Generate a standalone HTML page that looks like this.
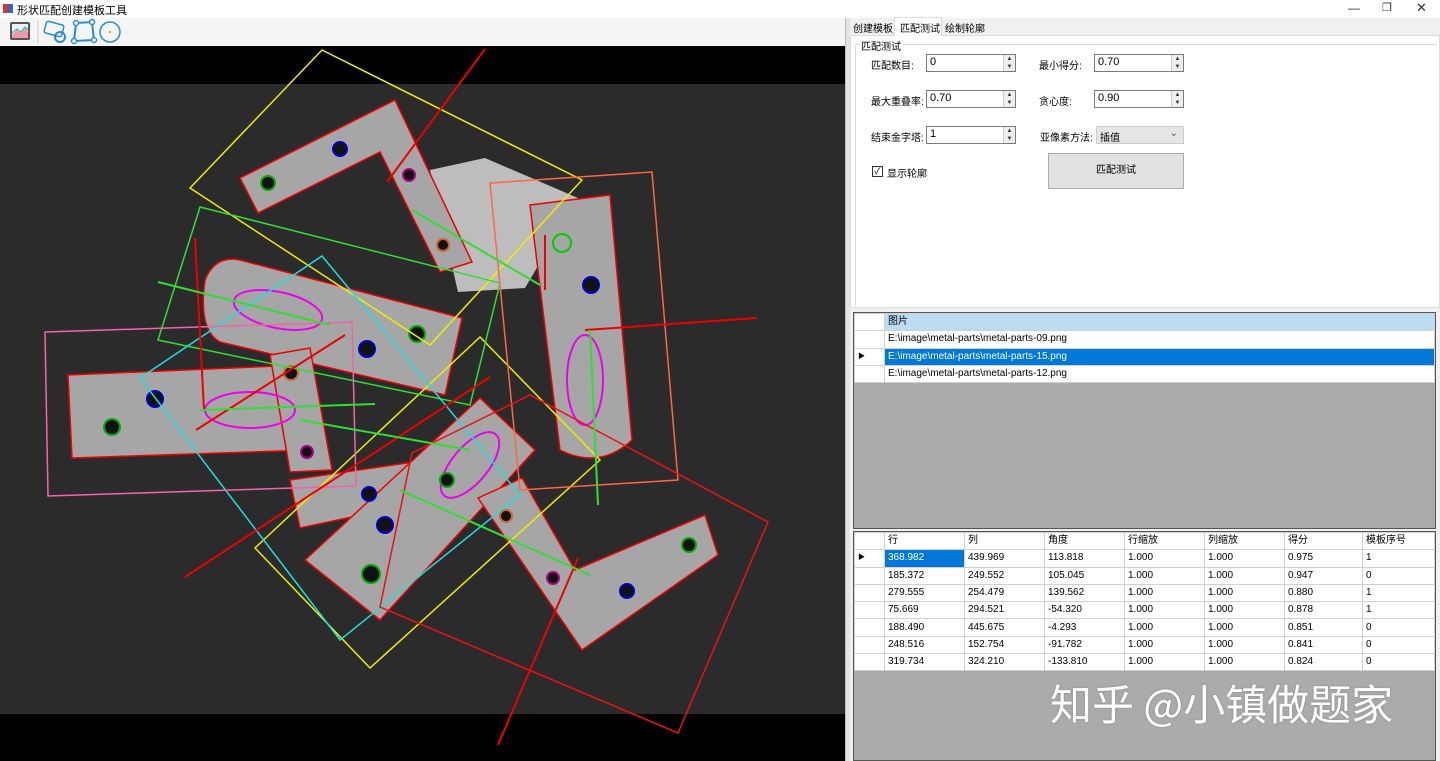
<!DOCTYPE html>
<html><head><meta charset="utf-8"><style>
*{margin:0;padding:0;box-sizing:border-box}
body{width:1440px;height:761px;overflow:hidden;background:#f0f0f0;font-family:"Liberation Sans","Noto Sans CJK SC",sans-serif;font-size:11px;color:#000;position:relative}
.a{position:absolute}
.inp{position:absolute;height:18px;border:1px solid #7a7a7a;background:#fff;padding:1px 3px;font-size:11px}
.spin{position:absolute;right:0;top:0;width:12px;height:16px;border-left:1px solid #ccc;background:#eee;font-size:6px;line-height:8px;text-align:center;color:#333}
.lbl{position:absolute;font-size:10px;white-space:nowrap}
table{border-collapse:collapse;font-size:10px}
td{border:1px solid #d0d0d0;height:17.3px;padding:0 3px;background:#fff;white-space:nowrap;vertical-align:middle;line-height:12px}
</style></head><body>
<div class="a" style="left:0;top:0;width:1440px;height:18px;background:#fff"></div>
<div class="a" style="left:3px;top:4px;width:10px;height:9px;background:linear-gradient(90deg,#d33 50%,#36c 50%)"></div>
<div class="a" style="left:17px;top:2px;font-size:11px">形状匹配创建模板工具</div>
<div class="a" style="left:1348px;top:1px;font-size:12px;color:#333">—</div>
<div class="a" style="left:1382px;top:1px;font-size:11px;color:#333">❐</div>
<div class="a" style="left:1416px;top:0px;font-size:13px;color:#333">✕</div>
<div class="a" style="left:0;top:18px;width:845px;height:28px;background:#f5f5f5"></div>
<svg class="a" style="left:0;top:18px" width="130" height="28">
<rect x="10" y="4" width="20" height="18" rx="2" fill="#555"/><rect x="12" y="6" width="16" height="14" fill="#eef"/><path d="M12 17 L17 12 L21 15 L25 10 L28 14 L28 20 L12 20Z" fill="#e9a"/><path d="M12 15 L17 11 L21 14 L25 9 L28 12" stroke="#3a7" fill="none"/>
<line x1="38" y1="3" x2="38" y2="25" stroke="#ccc"/>
<rect x="45" y="5" width="18" height="12" rx="2" fill="none" stroke="#2a8ccc" stroke-width="1.5" transform="rotate(15 54 11)"/><circle cx="60" cy="19" r="5" fill="none" stroke="#2a8ccc" stroke-width="2"/>
<path d="M76 5 L92 4 L94 22 L74 23Z" fill="none" stroke="#2a8ccc" stroke-width="2"/><circle cx="76" cy="5" r="2.5" fill="#fff" stroke="#2a8ccc" stroke-width="1.5"/><circle cx="92" cy="4" r="2.5" fill="#fff" stroke="#2a8ccc" stroke-width="1.5"/><circle cx="94" cy="22" r="2.5" fill="#fff" stroke="#2a8ccc" stroke-width="1.5"/><circle cx="74" cy="23" r="2.5" fill="#fff" stroke="#2a8ccc" stroke-width="1.5"/>
<circle cx="110" cy="14" r="10" fill="none" stroke="#2a8ccc" stroke-width="1.5"/><circle cx="110" cy="14" r="1" fill="#c80"/>
</svg>
<svg class="a" style="left:0;top:46px" width="845" height="715" viewBox="0 46 845 715">
<rect x="0" y="46" width="845" height="715" fill="#000"/>
<rect x="0" y="84" width="845" height="630" fill="#2b2b2b"/>
<g fill="#a6a6a6" stroke="#e00" stroke-width="1.5">
<path d="M430 170 L485 158 L578 198 L525 288 L458 292 Z" fill="#bdbdbd" stroke="none"/>
<path d="M240 178 L395 100 L472 262 L440 272 L380 152 L258 213 Z"/>
<path d="M205 280 Q215 255 240 260 L462 318 L445 395 L220 342 Q198 330 205 280Z"/>
<path d="M68 375 L300 365 L312 450 L72 458 Z"/>
<path d="M530 205 L610 195 L632 440 Q600 470 560 450 Z"/>
<path d="M270 355 L310 348 L332 470 L290 472 Z"/>
<path d="M290 480 L462 455 L470 492 L300 528 Z"/>
<path d="M305 560 L480 398 L535 450 L380 620 Z"/>
<path d="M478 498 L522 478 L575 570 L705 515 L718 555 L582 650 Z"/>
</g>
<g fill="none" stroke-width="2">
<ellipse cx="278" cy="310" rx="45" ry="18" stroke="#e0e" transform="rotate(12 278 310)"/>
<ellipse cx="250" cy="410" rx="45" ry="18" stroke="#e0e"/>
<ellipse cx="585" cy="380" rx="18" ry="45" stroke="#e0e"/>
<ellipse cx="470" cy="465" rx="18" ry="40" stroke="#e0e" transform="rotate(40 470 465)"/>
<g stroke="#0a0" fill="#111"><circle cx="268" cy="183" r="7"/><circle cx="417" cy="334" r="8"/><circle cx="112" cy="427" r="8"/><circle cx="371" cy="574" r="9"/><circle cx="689" cy="545" r="7"/><circle cx="447" cy="480" r="7"/></g>
<g stroke="#00c" fill="#111"><circle cx="340" cy="149" r="7"/><circle cx="367" cy="349" r="8"/><circle cx="155" cy="399" r="8"/><circle cx="591" cy="285" r="8"/><circle cx="385" cy="525" r="8"/><circle cx="627" cy="591" r="7"/><circle cx="369" cy="494" r="7"/></g>
<g stroke="#a08" fill="#111"><circle cx="409" cy="175" r="6"/><circle cx="553" cy="578" r="6"/><circle cx="307" cy="452" r="6"/></g>
<g stroke="#c63" fill="#111"><circle cx="443" cy="245" r="6"/><circle cx="291" cy="373" r="7"/><circle cx="506" cy="516" r="6"/></g>
<circle cx="562" cy="243" r="9" stroke="#0c0"/>
</g>
<g fill="none" stroke-width="1.5">
<path d="M190 188 L322 50 L582 180 L430 345 Z" stroke="#ee0"/>
<path d="M255 548 L480 337 L600 460 L370 668 Z" stroke="#ee0"/>
<path d="M200 207 L500 283 L470 405 L158 340 Z" stroke="#3d3"/>
<path d="M140 378 L322 256 L520 495 L340 640 Z" stroke="#2dd"/>
<path d="M45 332 L352 322 L356 486 L48 496 Z" stroke="#e6a"/>
<path d="M490 183 L652 172 L678 480 L520 490 Z" stroke="#f64"/>
<path d="M412 453 L530 395 L768 522 L678 733 L380 607 Z" stroke="#e11"/>
</g>
<g stroke-width="2" fill="none">
<line x1="185" y1="577" x2="490" y2="377" stroke="#e00"/>
<line x1="387" y1="182" x2="485" y2="49" stroke="#e00"/>
<line x1="498" y1="745" x2="578" y2="558" stroke="#e00"/>
<line x1="585" y1="330" x2="757" y2="318" stroke="#e00"/>
<line x1="195" y1="238" x2="204" y2="410" stroke="#e00"/>
<line x1="196" y1="430" x2="345" y2="335" stroke="#e00"/>
<line x1="545" y1="290" x2="545" y2="235" stroke="#e00"/>
<line x1="158" y1="282" x2="330" y2="325" stroke="#3d3"/>
<line x1="200" y1="410" x2="375" y2="404" stroke="#3d3"/>
<line x1="590" y1="330" x2="598" y2="505" stroke="#3d3"/>
<line x1="412" y1="210" x2="540" y2="285" stroke="#3d3"/>
<line x1="400" y1="490" x2="590" y2="575" stroke="#3d3"/>
<line x1="300" y1="420" x2="470" y2="450" stroke="#3d3"/>
</g>
</svg>
<div class="a" style="left:845px;top:18px;width:5px;height:743px;background:#e3e3e3;border-left:1px solid #bbb"></div>
<div class="a" style="left:850px;top:35px;width:590px;height:273px;background:#fff;border:1px solid #ddd"></div>
<div class="a" style="left:853px;top:20px;font-size:10px;white-space:nowrap">创建模板</div>
<div class="a" style="left:894px;top:17px;width:48px;height:19px;background:#fff;border:1px solid #ddd;border-bottom:none;font-size:10px;padding:2px 0 0 5px;white-space:nowrap">匹配测试</div>
<div class="a" style="left:945px;top:20px;font-size:10px;white-space:nowrap">绘制轮廓</div>
<div class="a" style="left:855px;top:44px;width:582px;height:262px;border:1px solid #ddd;border-right:none;border-bottom:none"></div>
<div class="a" style="left:859px;top:38px;background:#fff;padding:0 2px;font-size:10px;white-space:nowrap">匹配测试</div>
<div class="lbl" style="left:871px;top:57px">匹配数目:</div>
<div class="inp" style="left:926px;top:54px;width:90px">0<div class="spin">▲<br>▼</div></div>
<div class="lbl" style="left:1039px;top:57px">最小得分:</div>
<div class="inp" style="left:1094px;top:54px;width:90px">0.70<div class="spin">▲<br>▼</div></div>
<div class="lbl" style="left:871px;top:93px">最大重叠率:</div>
<div class="inp" style="left:926px;top:90px;width:90px">0.70<div class="spin">▲<br>▼</div></div>
<div class="lbl" style="left:1039px;top:93px">贪心度:</div>
<div class="inp" style="left:1094px;top:90px;width:90px">0.90<div class="spin">▲<br>▼</div></div>
<div class="lbl" style="left:871px;top:129px">结束金字塔:</div>
<div class="inp" style="left:926px;top:126px;width:90px">1<div class="spin">▲<br>▼</div></div>
<div class="lbl" style="left:1040px;top:129px">亚像素方法:</div>
<div class="a" style="left:1096px;top:126px;width:88px;height:18px;background:#e5e5e5;border:1px solid #ccc;font-size:10px;padding:2px 3px">插值<span style="position:absolute;right:5px;top:1px;color:#555">⌄</span></div>
<div class="a" style="left:872px;top:166px;width:11px;height:11px;border:1px solid #333;font-size:9px;line-height:9px;text-align:center">✓</div>
<div class="lbl" style="left:887px;top:165px">显示轮廓</div>
<div class="a" style="left:1048px;top:153px;width:136px;height:36px;background:#e1e1e1;border:1px solid #adadad;text-align:center;line-height:34px;font-size:10px">匹配测试</div>
<div class="a" style="left:853px;top:312px;width:583px;height:217px;background:#ababab;border:1px solid #555">
<table style="width:581px">
<tr><td style="width:30px;background:#fff"></td><td style="background:#bcdcf4">图片</td></tr>
<tr><td></td><td>E:\image\metal-parts\metal-parts-09.png</td></tr>
<tr><td style="font-size:7px">▶</td><td style="background:#0078d7;color:#fff">E:\image\metal-parts\metal-parts-15.png</td></tr>
<tr><td></td><td>E:\image\metal-parts\metal-parts-12.png</td></tr>
</table></div>
<div class="a" style="left:853px;top:531px;width:583px;height:230px;background:#ababab;border:1px solid #555">
<table style="width:581px">
<tr><td style="width:30px"></td><td style="width:80px">行</td><td style="width:80px">列</td><td style="width:80px">角度</td><td style="width:80px">行缩放</td><td style="width:80px">列缩放</td><td style="width:78px">得分</td><td>模板序号</td></tr>
<tr><td style="font-size:7px">▶</td><td style="background:#0078d7;color:#fff">368.982</td><td>439.969</td><td>113.818</td><td>1.000</td><td>1.000</td><td>0.975</td><td>1</td></tr>
<tr><td></td><td>185.372</td><td>249.552</td><td>105.045</td><td>1.000</td><td>1.000</td><td>0.947</td><td>0</td></tr>
<tr><td></td><td>279.555</td><td>254.479</td><td>139.562</td><td>1.000</td><td>1.000</td><td>0.880</td><td>1</td></tr>
<tr><td></td><td>75.669</td><td>294.521</td><td>-54.320</td><td>1.000</td><td>1.000</td><td>0.878</td><td>1</td></tr>
<tr><td></td><td>188.490</td><td>445.675</td><td>-4.293</td><td>1.000</td><td>1.000</td><td>0.851</td><td>0</td></tr>
<tr><td></td><td>248.516</td><td>152.754</td><td>-91.782</td><td>1.000</td><td>1.000</td><td>0.841</td><td>0</td></tr>
<tr><td></td><td>319.734</td><td>324.210</td><td>-133.810</td><td>1.000</td><td>1.000</td><td>0.824</td><td>0</td></tr>
</table></div>
<div class="a" style="left:1050px;top:672px;font-size:42px;color:#fff;font-family:'Noto Sans CJK SC',sans-serif;white-space:nowrap;text-shadow:0 0 2px #888">知乎 @小镇做题家</div>
</body></html>
